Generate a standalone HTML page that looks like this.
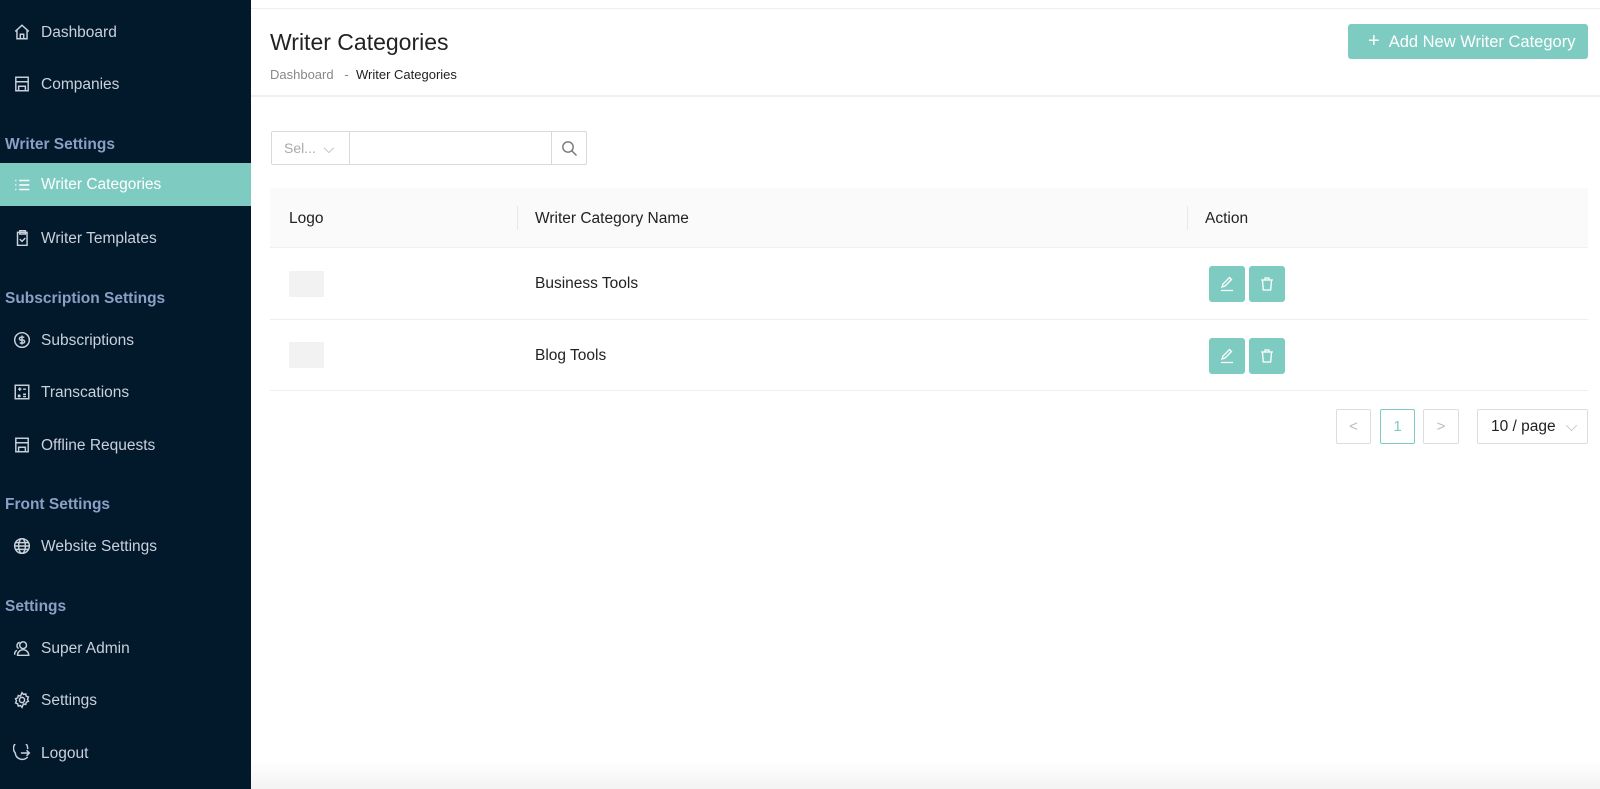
<!DOCTYPE html>
<html><head><meta charset="utf-8"><style>
*{box-sizing:border-box;margin:0;padding:0}
body{width:1600px;height:789px;overflow:hidden;font-family:"Liberation Sans",sans-serif;background:#fff;position:relative}
.sb{position:absolute;left:0;top:0;width:251px;height:789px;background:#02182b}
.it{position:absolute;left:0;width:251px;height:42px;display:flex;align-items:center;color:#c9d1db;font-size:15.5px}
.it svg{position:absolute;left:13px;width:18px;height:18px;fill:none;stroke:#c9d1db;stroke-width:1.3}
.it span{position:absolute;left:41px;top:13px}
.it.act{background:#7ecbc2;color:#fff}
.it.act svg{stroke:#fff}
.hd{position:absolute;left:5px;color:#8c9fc4;font-size:15.5px;font-weight:bold}
.main{position:absolute;left:251px;top:0;right:0;bottom:0}
.a{position:absolute}
.btn{background:#7ecbc2;border-radius:3px}
.pg{position:absolute;border:1px solid #ddd;border-radius:2px;height:35px;display:flex;align-items:center;justify-content:center;color:#bbb;font-size:15px}
</style></head><body>
<div class="sb">
<div class="it" style="top:11px"><svg viewBox="0 0 16 16"><path d="M2 7.5L8 2l6 5.5M3.5 6.5V14h9V6.5M6.5 14v-4h3v4"/></svg><span>Dashboard</span></div>
<div class="it" style="top:63px"><svg viewBox="0 0 16 16"><rect x="2.5" y="2" width="11" height="12"/><path d="M2.5 6h11M5 14v-4h6v4"/></svg><span>Companies</span></div>
<div class="hd" style="top:136px">Writer Settings</div>
<div class="it act" style="top:163px;height:43px"><svg viewBox="0 0 16 16"><path d="M2 4h1M2 8h1M2 12h1M5.5 4h9M5.5 8h9M5.5 12h9"/></svg><span>Writer Categories</span></div>
<div class="it" style="top:217px"><svg viewBox="0 0 16 16"><path d="M4 3h8.5v11.5H4zM6 1.5h5v3H6zM6 9l2 2 3-3"/></svg><span>Writer Templates</span></div>
<div class="hd" style="top:290px">Subscription Settings</div>
<div class="it" style="top:319px"><svg viewBox="0 0 16 16"><circle cx="8" cy="8" r="6.5"/><path d="M10 5.5H7a1.3 1.3 0 000 2.6h2a1.3 1.3 0 010 2.6H6M8 4v8"/></svg><span>Subscriptions</span></div>
<div class="it" style="top:371px"><svg viewBox="0 0 16 16"><rect x="2" y="2" width="12" height="12"/><path d="M4.5 5.5h3M6 4v3M9 5.5h2.5M4.5 10.5l2 2M6.5 10.5l-2 2M9 10h2.5M9 12h2.5"/></svg><span>Transcations</span></div>
<div class="it" style="top:424px"><svg viewBox="0 0 16 16"><rect x="2.5" y="2" width="11" height="12"/><path d="M2.5 6h11M5 14v-4h6v4"/></svg><span>Offline Requests</span></div>
<div class="hd" style="top:496px">Front Settings</div>
<div class="it" style="top:525px"><svg viewBox="0 0 16 16"><circle cx="8" cy="8" r="6.5"/><ellipse cx="8" cy="8" rx="3" ry="6.5"/><path d="M1.5 8h13M2.5 5h11M2.5 11h11"/></svg><span>Website Settings</span></div>
<div class="hd" style="top:598px">Settings</div>
<div class="it" style="top:627px"><svg viewBox="0 0 16 16"><circle cx="9" cy="5.5" r="3"/><path d="M4 14.5a5 5 0 0110 0zM6 3a3 3 0 00-1 5.5M3.5 10a4 4 0 00-2 4"/></svg><span>Super Admin</span></div>
<div class="it" style="top:679px"><svg viewBox="0 0 16 16"><circle cx="8" cy="8" r="2.3"/><path d="M8 1.5l1.3 1.6 2-.5.5 2 1.9.8-.8 1.9.8 1.9-1.9.8-.5 2-2-.5L8 14.5l-1.3-1.6-2 .5-.5-2-1.9-.8.8-1.9-.8-1.9 1.9-.8.5-2 2 .5z"/></svg><span>Settings</span></div>
<div class="it" style="top:732px"><svg viewBox="0 0 16 16"><path d="M13 4.5A6.3 6.3 0 102 8a6.3 6.3 0 0011 3.5M7 8h7.5M12 5.5L14.5 8 12 10.5"/></svg><span>Logout</span></div>
</div>
<div class="main">
<div class="a" style="left:0;right:0;top:8px;height:1px;background:#eee"></div>
<div class="a" style="left:19px;top:29px;font-size:23px;color:#222">Writer Categories</div>
<div class="a" style="left:19px;top:67px;font-size:13px;color:#888">Dashboard &nbsp; - &nbsp;<span style="color:#222">Writer Categories</span></div>
<div class="a btn" style="left:1097px;top:24px;width:240px;height:35px;color:#fff;font-size:16.5px;line-height:35px;padding-left:20px"><span style="font-size:20px;font-weight:300;margin-right:9px">+</span>Add New Writer Category</div>
<div class="a" style="left:0;right:0;top:95px;height:2px;background:#f0f0f0"></div>
<div class="a" style="left:20px;top:131px;width:316px;height:34px;border:1px solid #d9d9d9;border-radius:2px"></div>
<div class="a" style="left:98px;top:131px;width:1px;height:34px;background:#d9d9d9"></div>
<div class="a" style="left:300px;top:131px;width:1px;height:34px;background:#d9d9d9"></div>
<div class="a" style="left:33px;top:140px;font-size:14px;color:#aaa">Sel... &nbsp;⌵</div>
<svg class="a" style="left:310px;top:140px" width="17" height="17" viewBox="0 0 17 17" fill="none" stroke="#777" stroke-width="1.4"><circle cx="7" cy="7" r="5.2"/><path d="M11 11l4.5 4.5"/></svg>
<div class="a" style="left:19px;top:188px;width:1318px;height:60px;background:#fafafa;border-bottom:1px solid #f0f0f0"></div>
<div class="a" style="left:266px;top:206px;width:1px;height:24px;background:#e8e8e8"></div>
<div class="a" style="left:936px;top:206px;width:1px;height:24px;background:#e8e8e8"></div>
<div class="a" style="left:38px;top:210px;font-size:15.5px;color:#222">Logo</div>
<div class="a" style="left:284px;top:210px;font-size:15.5px;color:#222">Writer Category Name</div>
<div class="a" style="left:954px;top:210px;font-size:15.5px;color:#222">Action</div>
<div class="a" style="left:19px;top:319px;width:1318px;height:1px;background:#eee"></div>
<div class="a" style="left:19px;top:390px;width:1318px;height:1px;background:#eee"></div>
<div class="a" style="left:38px;top:271px;width:35px;height:26px;background:#f2f2f2"></div>
<div class="a" style="left:38px;top:342px;width:35px;height:26px;background:#f2f2f2"></div>
<div class="a" style="left:284px;top:275px;font-size:15.5px;color:#222">Business Tools</div>
<div class="a" style="left:284px;top:347px;font-size:15.5px;color:#222">Blog Tools</div>
<div class="a btn" style="left:958px;top:266px;width:36px;height:36px"></div>
<div class="a btn" style="left:998px;top:266px;width:36px;height:36px"></div>
<div class="a btn" style="left:958px;top:338px;width:36px;height:36px"></div>
<div class="a btn" style="left:998px;top:338px;width:36px;height:36px"></div>
<svg class="a" style="left:967px;top:275px" width="18" height="18" viewBox="0 0 18 18" fill="none" stroke="#fff" stroke-width="1.3"><path d="M4 12l1-3 6.5-6.5 2 2L7 11z M3 15.5h12"/></svg>
<svg class="a" style="left:1007px;top:275px" width="18" height="18" viewBox="0 0 18 18" fill="none" stroke="#fff" stroke-width="1.3"><path d="M3 5h12M7 5V3h4v2M4.5 5l.8 10h7.4l.8-10"/></svg>
<svg class="a" style="left:967px;top:347px" width="18" height="18" viewBox="0 0 18 18" fill="none" stroke="#fff" stroke-width="1.3"><path d="M4 12l1-3 6.5-6.5 2 2L7 11z M3 15.5h12"/></svg>
<svg class="a" style="left:1007px;top:347px" width="18" height="18" viewBox="0 0 18 18" fill="none" stroke="#fff" stroke-width="1.3"><path d="M3 5h12M7 5V3h4v2M4.5 5l.8 10h7.4l.8-10"/></svg>
<div class="pg" style="left:1085px;top:409px;width:35px">&lt;</div>
<div class="pg" style="left:1129px;top:409px;width:35px;border-color:#7ecbc2;color:#7ecbc2">1</div>
<div class="pg" style="left:1172px;top:409px;width:36px">&gt;</div>
<div class="pg" style="left:1226px;top:409px;width:111px;color:#222;justify-content:flex-start;padding-left:13px;font-size:15.5px">10 / page <span style="color:#bbb;margin-left:10px">⌵</span></div>
<div class="a" style="left:0;right:0;top:760px;height:29px;background:linear-gradient(#fff,#f3f3f3)"></div>
</div>
</body></html>
